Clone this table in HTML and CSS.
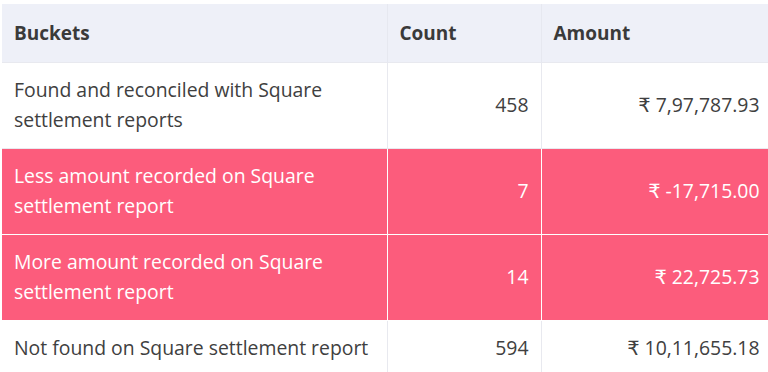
FILE: index.html
```html
<!DOCTYPE html>
<html>
<head>
<meta charset="utf-8">
<link rel="stylesheet" href="styles.css">
</head>
<body>
<div class="wrap">
<table class="buckets">
  <colgroup><col class="c1"><col class="c2"><col class="c3"></colgroup>
  <thead>
    <tr><th>Buckets</th><th>Count</th><th>Amount</th></tr>
  </thead>
  <tbody>
    <tr><td>Found and reconciled with Square settlement reports</td><td class="num">458</td><td class="num">₹ 7,97,787.93</td></tr>
    <tr class="bad"><td>Less amount recorded on Square settlement report</td><td class="num">7</td><td class="num">₹ -17,715.00</td></tr>
    <tr class="bad"><td>More amount recorded on Square settlement report</td><td class="num">14</td><td class="num">₹ 22,725.73</td></tr>
    <tr><td>Not found on Square settlement report</td><td class="num">594</td><td class="num">₹ 10,11,655.18</td></tr>
  </tbody>
</table>
</div>
</body>
</html>
```
FILE: styles.css
```css
html, body { margin: 0; padding: 0; overflow: hidden; background: #fff; }
.wrap { padding: 4px 0 0 2px; width: 800px; }
.buckets {
  border-collapse: collapse;
  table-layout: fixed;
  width: 770px;
  font-family: "Open Sans", "DejaVu Sans", sans-serif;
  font-size: 19.4px;
  color: #404040;
}
.c1 { width: 385px; }
.c2 { width: 154px; }
.c3 { width: 231px; }
.buckets th {
  background: #eef0f8;
  text-align: left;
  font-size: 19px;
  font-weight: 700;
  height: 58px;
  padding: 0 12px;
  box-sizing: border-box;
  border-right: 1px solid #e6e8f0;
  color: #3a3a3a;
}
.buckets td {
  padding: 12px 12px 13px;
  line-height: 30px;
  border: 1px solid #e8e9ef;
  border-left: none;
  vertical-align: middle;
}
.buckets td.num { text-align: right; }
.buckets tr.bad td { background: #fc5c7c; color: #fff; border-color: #fff; border-left: none; }
```
